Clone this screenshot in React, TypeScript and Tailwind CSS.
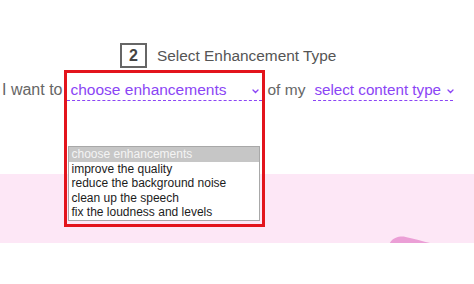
import React from "react";

const Chevron = () => (
  <svg width="7" height="5" viewBox="0 0 7 5" className="ml-[6px] mt-[3px] shrink-0">
    <path d="M1 1 L3.5 3.5 L6 1" fill="none" stroke="#8b45f5" strokeWidth="1.3" strokeLinecap="round" />
  </svg>
);

const options = [
  "choose enhancements",
  "improve the quality",
  "reduce the background noise",
  "clean up the speech",
  "fix the loudness and levels",
];

export default function App() {
  return (
    <div className="w-[474px] h-[284px] bg-white overflow-hidden flex flex-col" style={{ fontFamily: '"Liberation Sans", Arial, sans-serif' }}>
      <div className="shrink-0 h-[43px]" />
      <div className="shrink-0 flex items-center pl-[120px] h-[25px]">
        <div className="w-[27px] h-[25px] border-2 border-[#666] flex items-center justify-center text-[16px] font-bold text-[#444]">
          2
        </div>
        <span className="ml-[10px] text-[15.4px] text-[#555]">Select Enhancement Type</span>
      </div>
      <div className="shrink-0 h-[11px]" />
      <div className="relative z-10 shrink-0 flex items-end h-[22px] pl-[2px] text-[16px] leading-[20px] whitespace-nowrap">
        <span className="text-[#666] pb-[1px]">I want to</span>
        <div className="relative ml-[5px] w-[195px]">
          <div className="flex items-center justify-between pl-[3px] pr-[3px] border-b-[1.5px] border-dashed border-[#8b45f5] text-[#8b45f5] text-[15.5px]">
            <span>choose enhancements</span>
            <Chevron />
          </div>
          <div className="absolute left-[-3px] top-[-10px] w-[201px] h-[157px] border-[3px] border-[#e3141c]">
            <div className="absolute left-[1px] top-[73px] w-[192px] border border-[#a8a8a8] bg-white leading-[14.5px] text-[12px]">
              {options.map((o, i) => (
                <div key={o} className={i === 0 ? "bg-[#c6c6c6] text-[#f4f4f4] px-[2px]" : "text-[#1c1c1c] px-[2px]"}>
                  {o}
                </div>
              ))}
            </div>
          </div>
        </div>
        <span className="ml-[5px] text-[#666] text-[15.5px] pb-[1px]">of my</span>
        <div className="ml-[8px] w-[140px] flex items-center pl-[1px] border-b-[1.5px] border-dashed border-[#8b45f5] text-[#8b45f5] text-[15.2px]">
          <span>select content type</span>
          <Chevron />
        </div>
      </div>
      <div className="shrink-0 h-[73px]" />
      <div className="relative shrink-0 h-[69px] bg-[#fde7f6]">
        <svg className="absolute left-[388px] bottom-0" width="44" height="7" viewBox="0 0 46 8">
          <path d="M0 8 C4 1 12 0 18 1 C28 3 38 6 46 8 Z" fill="#eb9fd6" />
        </svg>
      </div>
    </div>
  );
}
